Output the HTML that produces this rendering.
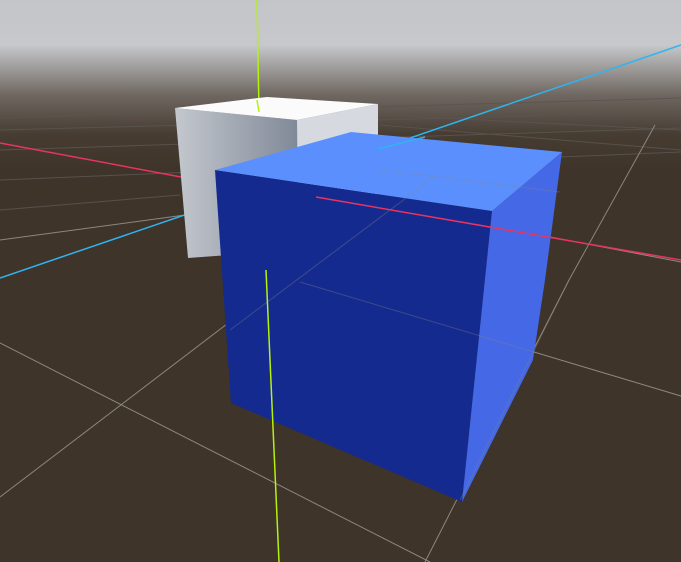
<!DOCTYPE html>
<html><head><style>html,body{margin:0;padding:0;background:#3e3429;}svg{display:block}</style></head>
<body>
<svg width="681" height="562" viewBox="0 0 681 562" xmlns="http://www.w3.org/2000/svg">
<defs>
<linearGradient id="sky" x1="0" y1="0" x2="0" y2="1">
<stop offset="0" stop-color="#c3c5c9"/>
<stop offset="0.08" stop-color="#c6c8cc"/>
<stop offset="0.11" stop-color="#a9a8a7"/>
<stop offset="0.17" stop-color="#6e6660"/>
<stop offset="0.24" stop-color="#463c32"/>
<stop offset="0.30" stop-color="#3e3429"/>
<stop offset="1" stop-color="#3e3429"/>
</linearGradient>
<linearGradient id="wl" x1="0" y1="0" x2="1" y2="0">
<stop offset="0" stop-color="#c4c8ce"/>
<stop offset="1" stop-color="#808998"/>
</linearGradient>
</defs>
<rect width="681" height="562" fill="url(#sky)"/>
<g stroke="#5b5450" stroke-width="1" fill="none" opacity="0.9">
<line x1="0" y1="118" x2="681" y2="98"/>
<line x1="0" y1="130" x2="681" y2="112"/>
<line x1="0" y1="150" x2="681" y2="128"/>
<line x1="0" y1="180" x2="681" y2="152"/>
<line x1="0" y1="210" x2="180" y2="195"/>
<line x1="380" y1="125" x2="681" y2="150"/>
<line x1="380" y1="115" x2="681" y2="130"/>
</g>
<g stroke="#8c8782" stroke-width="1" fill="none">
<line x1="0" y1="343" x2="430" y2="562"/>
<line x1="0" y1="497" x2="290" y2="276"/>
<line x1="300" y1="282" x2="681" y2="396"/>
<line x1="569" y1="280" x2="425" y2="562"/>
<line x1="569" y1="280" x2="655" y2="125"/>
<line x1="540" y1="235" x2="681" y2="262"/>
<line x1="0" y1="240" x2="185" y2="215"/>
</g>
<line x1="0" y1="143" x2="181" y2="177" stroke="#e8345e" stroke-width="1.5"/>
<line x1="0" y1="278" x2="246" y2="194" stroke="#2fb4f2" stroke-width="1.5"/>
<line x1="378" y1="149" x2="681" y2="45" stroke="#2fb4f2" stroke-width="1.5"/>
<line x1="257" y1="0" x2="259" y2="112" stroke="#b5f20c" stroke-width="1.5"/>
<polygon points="175,108 297,120 298,250 188,258" fill="url(#wl)"/>
<polygon points="297,120 378,104 378,250 298,250" fill="#d6d9df"/>
<polygon points="175,108 267,97 378,104 297,120" fill="#fbfbfc"/>
<line x1="257" y1="100" x2="259" y2="112" stroke="#b5f20c" stroke-width="1.5"/>
<polygon points="215,170 492,211 462,502 231,403" fill="#142a8f"/>
<polygon points="492,211 562,152 545,280 533,360 462,502" fill="#4468e6"/>
<polygon points="215,170 351,132 562,152 492,211" fill="#5b8ffd"/>
<g stroke="#8c8782" stroke-width="1" fill="none" opacity="0.35">
<line x1="230" y1="330" x2="430" y2="180"/>
<line x1="300" y1="282" x2="681" y2="396"/>
<line x1="569" y1="280" x2="460" y2="500"/>
<line x1="380" y1="170" x2="560" y2="192"/>
</g>
<line x1="378" y1="149" x2="425" y2="137" stroke="#2fb4f2" stroke-width="1.5"/>
<line x1="316" y1="197" x2="681" y2="260" stroke="#e8345e" stroke-width="1.5"/>
<line x1="266" y1="270" x2="279" y2="562" stroke="#b5f20c" stroke-width="1.5"/>
</svg>
</body></html>
